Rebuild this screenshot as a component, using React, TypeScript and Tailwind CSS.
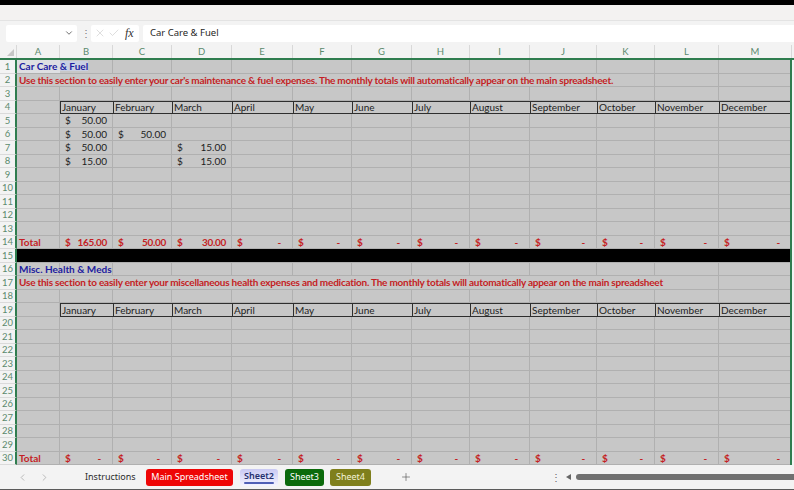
import clsx from "clsx";
import { ChevronDown, ChevronLeft, ChevronRight, Plus, X, Check } from "lucide-react";

const COLS = "ABCDEFGHIJKLM".split("");
const MONTHS = [
  "January",
  "February",
  "March",
  "April",
  "May",
  "June",
  "July",
  "August",
  "September",
  "October",
  "November",
  "December",
];
const GRID =
  "grid grid-cols-[17px_43px_53px_59px_60px_61px_59px_60px_58px_60px_67px_58px_64px_73px]";

// values for columns B..M
const DATA: Record<number, (string | null)[]> = {
  5: ["50.00"],
  6: ["50.00", "50.00"],
  7: ["50.00", null, "15.00"],
  8: ["15.00", null, "15.00"],
  14: ["165.00", "50.00", "30.00", "-", "-", "-", "-", "-", "-", "-", "-", "-"],
  30: ["-", "-", "-", "-", "-", "-", "-", "-", "-", "-", "-", "-"],
};

const cellBase = "border-r border-b border-[#b0b0b0] bg-[#c7c7c7] h-full";

function RowHeader({ n }: { n: number }) {
  return (
    <div className="h-full bg-[#f3f3f3] border-r-2 border-[#2f7d4f] border-b border-b-[#dadada] flex items-center justify-center text-[9.5px] text-[#5b8a6d] leading-none">
      {n}
    </div>
  );
}

function Empty({ className }: { className?: string }) {
  return <div className={clsx(cellBase, className)} />;
}

function Money({ v, red }: { v: string | null; red?: boolean }) {
  if (!v) return <Empty />;
  return (
    <div
      className={clsx(
        cellBase,
        "flex items-center justify-between pl-[5px] leading-none",
        v === "-" ? "pr-[11px]" : "pr-[5px]",
        red ? "text-[#c41e24] font-bold tracking-[-0.3px]" : "text-[#1d1d1d]"
      )}
    >
      <span>$</span>
      <span>{v}</span>
    </div>
  );
}

function SheetRow({ n }: { n: number }) {
  let cells: React.ReactNode;

  if (n === 1 || n === 16) {
    cells = (
      <>
        <div
          className={clsx(
            cellBase,
            "relative z-10 flex items-center pl-[2px] whitespace-nowrap font-bold text-[#1c1ca0] leading-none",
            n === 1 && "bg-[#dedfe2] border-r-0"
          )}
        >
          {n === 1 ? (
            <>
              <span>Car Care&nbsp;</span>
              <span className="bg-[#c9d0e2]">&amp; Fuel</span>
            </>
          ) : (
            "Misc. Health & Meds"
          )}
        </div>
        {COLS.slice(1).map((c) => (
          <Empty key={c} />
        ))}
      </>
    );
  } else if (n === 2 || n === 17) {
    const text =
      n === 2
        ? "Use this section to easily enter your car's maintenance & fuel expenses. The monthly totals will automatically appear on the main spreadsheet."
        : "Use this section to easily enter your miscellaneous health expenses and medication. The monthly totals will automatically appear on the main spreadsheet";
    const span = n === 2 ? 11 : 12;
    cells = (
      <>
        <div
          className={clsx(
            cellBase,
            "flex items-center pl-[2px] whitespace-nowrap font-bold text-[#c41e24] leading-none tracking-[-0.23px]"
          )}
          style={{ gridColumn: `span ${span} / span ${span}` }}
        >
          {text}
        </div>
        {COLS.slice(span).map((c) => (
          <Empty key={c} />
        ))}
      </>
    );
  } else if (n === 4 || n === 19) {
    cells = (
      <>
        <Empty />
        {MONTHS.map((m, i) => (
          <div
            key={m}
            className={clsx(
              "h-full bg-[#c7c7c7] border-t border-l border-b-[1.5px] border-[#2e2e2e] flex items-center pl-[1px] text-[#1d1d1d] leading-none",
              i === 11 && "border-r"
            )}
          >
            {m}
          </div>
        ))}
      </>
    );
  } else if (n === 15) {
    cells = <div className="h-full bg-black col-span-13 border-b border-[#b0b0b0]" />;
  } else if (DATA[n]) {
    const red = n === 14 || n === 30;
    const vals = DATA[n];
    cells = (
      <>
        <div
          className={clsx(
            cellBase,
            "flex items-center pl-[2px] leading-none",
            red && "font-bold text-[#c41e24]"
          )}
        >
          {red ? "Total" : ""}
        </div>
        {COLS.slice(1).map((c, i) => (
          <Money key={c} v={vals[i] ?? null} red={red} />
        ))}
      </>
    );
  } else {
    cells = COLS.map((c) => <Empty key={c} />);
  }

  return (
    <div className={clsx(GRID, "h-[13.5px]")}>
      <RowHeader n={n} />
      {cells}
    </div>
  );
}

export default function App() {
  const rows = Array.from({ length: 30 }, (_, i) => i + 1);

  return (
    <div className="w-[794px] h-[490px] overflow-hidden bg-[#f3f3f3] flex flex-col font-['Noto_Sans',sans-serif]">
      {/* window edge */}
      <div className="h-[5px] bg-black shrink-0" />
      <div className="h-[16px] bg-[#f3f2f1] border-b border-[#e3e3e3] shrink-0" />

      {/* formula bar */}
      <div className="h-[24px] shrink-0 flex items-center pl-[6px] gap-[4px] bg-[#f3f3f3]">
        <div className="w-[71px] h-[17px] bg-white rounded-[2px] flex items-center justify-end pr-[3px]">
          <ChevronDown size={10} strokeWidth={2} className="text-[#555]" />
        </div>
        <span className="text-[#777] text-[10px] leading-none w-[6px] text-center">⋮</span>
        <div className="w-[48px] h-[17px] bg-white rounded-[2px] flex items-center gap-[2px] pl-[3px]">
          <X size={12} strokeWidth={1.1} className="text-[#c3c3c3]" />
          <Check size={12} strokeWidth={1.1} className="text-[#c3c3c3]" />
          <span className="font-['Liberation_Serif',serif] italic text-[12px] text-[#333] leading-none ml-[3px]">
            fx
          </span>
        </div>
        <div className="flex-1 h-[17px] bg-white rounded-l-[2px] flex items-center pl-[7px] text-[9.5px] text-[#262626]">
          Car Care &amp; Fuel
        </div>
      </div>

      {/* sheet */}
      <div className="shrink-0 font-['Lato',sans-serif] text-[10px]">
        <div className={clsx(GRID, "h-[15px] border-b-2 border-[#2f7d4f] bg-[#f3f3f3]")}>
          <div className="relative h-full border-r border-[#d8d8d8]">
            <div className="absolute right-[2px] bottom-[2px] w-0 h-0 border-l-[7px] border-l-transparent border-b-[7px] border-b-[#c6c6c6]" />
          </div>
          {COLS.map((c) => (
            <div
              key={c}
              className="h-full border-r border-[#d8d8d8] flex items-center justify-center text-[9.5px] text-[#5b8a6d] leading-none"
            >
              {c}
            </div>
          ))}
        </div>
        <div className="relative">
          {rows.map((n) => (
            <SheetRow key={n} n={n} />
          ))}
          <div className="absolute left-[790px] top-0 bottom-0 w-[2px] bg-[#2f7d4f]" />
        </div>
      </div>

      {/* sheet tabs */}
      <div className="flex-1 flex items-center bg-[#f3f3f3] border-b border-[#5a5a5a] text-[9px]">
        <ChevronLeft size={11} strokeWidth={1.5} className="ml-[17px] text-[#a0a0a0]" />
        <ChevronRight size={11} strokeWidth={1.5} className="ml-[11px] text-[#a0a0a0]" />
        <span className="ml-[35px] w-[61px] text-[#2b2b2b]">Instructions</span>
        <div className="w-[87px] h-[17px] rounded-[3px] bg-[#ee0606] text-white flex items-center justify-center">
          Main Spreadsheet
        </div>
        <div className="ml-[7px] w-[38px] h-[17px] rounded-[3px] bg-gradient-to-b from-[#c9c9f3] to-[#f4f4ff] text-[#24306e] font-semibold flex flex-col items-center justify-center leading-none">
          <span>Sheet2</span>
          <span className="mt-[2px] h-[2px] w-[30px] bg-[#4f5fb5] rounded" />
        </div>
        <div className="ml-[7px] w-[39px] h-[17px] rounded-[3px] bg-[#0b6a0b] text-white flex items-center justify-center">
          Sheet3
        </div>
        <div className="ml-[6px] w-[41px] h-[17px] rounded-[3px] bg-[#7f7f1c] text-[#f2f2d8] flex items-center justify-center">
          Sheet4
        </div>
        <Plus size={12} strokeWidth={1.3} className="ml-[29px] text-[#555]" />
        <span className="ml-[139px] w-[6px] text-center text-[#666] text-[10px] leading-none">⋮</span>
        <div className="ml-[9px] w-0 h-0 border-y-[3.5px] border-y-transparent border-r-[5px] border-r-[#666]" />
        <div className="ml-[5px] flex-1 h-[6px] bg-[#707070] rounded-l-full" />
      </div>
    </div>
  );
}
